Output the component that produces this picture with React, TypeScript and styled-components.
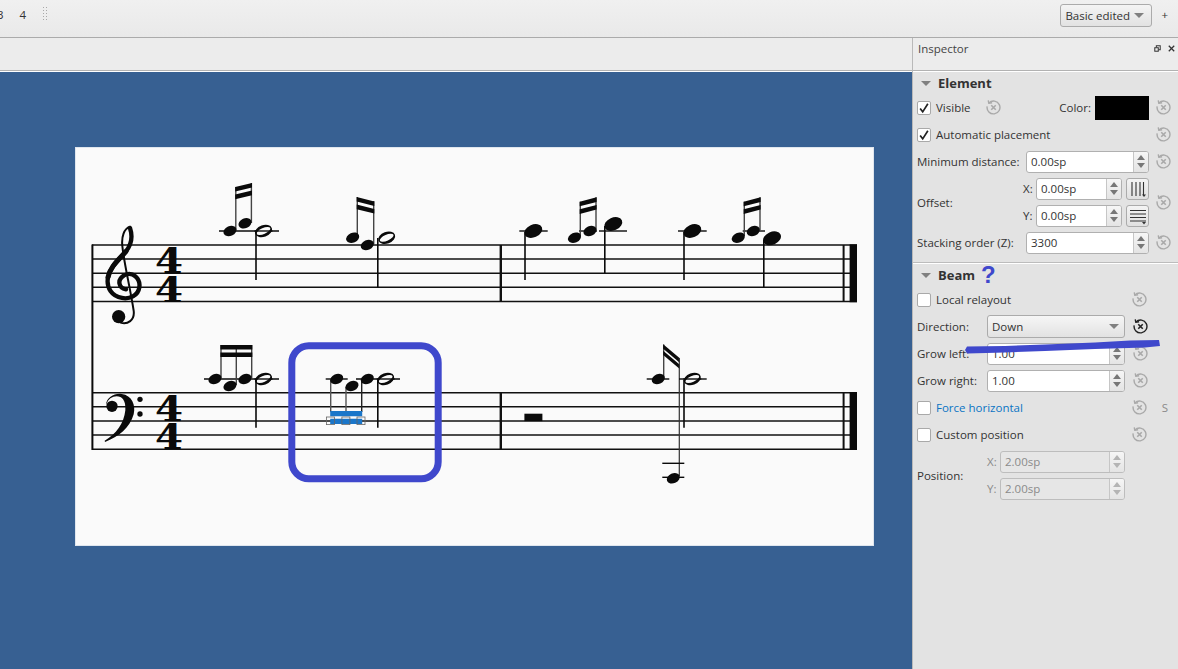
import React from "react";
import styled, { createGlobalStyle } from "styled-components";

const GlobalStyle = createGlobalStyle`
  html, body, #root {
    margin: 0;
    height: 100%;
  }
  body {
    font-family: "Open Sans", "Noto Sans", sans-serif;
    font-size: 11.5px;
    color: #333;
    overflow: hidden;
  }
`;

const INK = "#0a0a0a";
const MARKER = "#3f48cc";
const SELECTED = "#1a76c9";

/* ---------- score drawing ---------- */

const Head = ({ x, y, big, open, struck }: { x: number; y: number; big?: boolean; open?: boolean; struck?: boolean }) => {
  if (open) {
    return (
      <g>
        <ellipse cx={x} cy={y} rx={8.8} ry={5.8} fill={INK} transform={`rotate(-20 ${x} ${y})`} />
        <ellipse cx={x} cy={y} rx={7.4} ry={3} fill="#fafafa" transform={`rotate(-24 ${x} ${y})`} />
        {struck && <line x1={x - 9} x2={x + 9} y1={y} y2={y} stroke={INK} strokeWidth={1.4} />}
      </g>
    );
  }
  return (
    <ellipse
      cx={x}
      cy={y}
      rx={big ? 9.4 : 6.8}
      ry={big ? 6.4 : 4.9}
      fill={INK}
      transform={`rotate(-24 ${x} ${y})`}
    />
  );
};

const Line = ({ x1, y1, x2, y2, w = 1.4, c = INK }: { x1: number; y1: number; x2: number; y2: number; w?: number; c?: string }) => (
  <line x1={x1} y1={y1} x2={x2} y2={y2} stroke={c} strokeWidth={w} />
);

// two stacked beams between two stems
const Beams = ({ x1, y1, x2, y2, c = INK, t = 4.6, gap = 7.6 }: { x1: number; y1: number; x2: number; y2: number; c?: string; t?: number; gap?: number }) => (
  <g fill={c}>
    <polygon points={`${x1},${y1} ${x2},${y2} ${x2},${y2 + t} ${x1},${y1 + t}`} />
    <polygon points={`${x1},${y1 + gap} ${x2},${y2 + gap} ${x2},${y2 + gap + t} ${x1},${y1 + gap + t}`} />
  </g>
);

const Staff = ({ top }: { top: number }) => (
  <g>
    {[0, 14.1, 28.2, 42.3, 56.5].map((d) => (
      <Line key={d} x1={92} x2={857} y1={top + d} y2={top + d} w={1.5} c="#111" />
    ))}
    <Line x1={500.8} x2={500.8} y1={top} y2={top + 56.5} w={2.4} c="#111" />
    <Line x1={843.6} x2={843.6} y1={top} y2={top + 56.5} w={2} c="#111" />
    <rect x={849.6} y={top - 0.6} width={7.4} height={57.8} fill={INK} />
  </g>
);

const TimeDigit = styled.text`
  font-family: "DejaVu Serif", serif;
  font-weight: 700;
  font-size: 36px;
  fill: ${INK};
  text-anchor: middle;
`;

const TimeSig = ({ top }: { top: number }) => (
  <g>
    <g transform={`translate(169 ${top + 28}) scale(1.12 1)`}>
      <TimeDigit>4</TimeDigit>
    </g>
    <g transform={`translate(169 ${top + 56.5}) scale(1.12 1)`}>
      <TimeDigit>4</TimeDigit>
    </g>
  </g>
);

const TrebleClef = () => (
  <g transform="translate(90 220) scale(.3333)" fill="none" stroke={INK} strokeLinecap="round">
    <path d="M108 208 C86 204 80 180 102 166 C128 152 152 176 148 202 C144 228 118 238 96 234 C66 228 48 204 54 172 C60 140 88 118 108 94 C124 74 128 48 120 24" strokeWidth={13} />
    <path d="M120 20 C102 26 94 50 97 78 C102 130 120 200 131 272 C135 302 112 314 92 308" strokeWidth={6} />
    <path d="M54 172 C60 140 88 118 108 94" strokeWidth={15} />
    <circle cx={86} cy={290} r={20} fill={INK} stroke="none" />
  </g>
);

const BassClef = () => (
  <g transform="translate(90 385) scale(.3333)" fill={INK}>
    <path d="M48 60 C50 36 74 24 95 27 C126 31 138 60 131 88 C120 128 86 156 45 171 L44 167 C78 148 102 116 106 76 C108 46 96 34 80 34 C66 35 56 42 52 52 Z" />
    <circle cx={66} cy={64} r={17} />
    <circle cx={150} cy={43} r={8} />
    <circle cx={150} cy={87} r={8} />
  </g>
);

const Score = styled.svg`
  display: block;
  width: 100%;
  height: 100%;
`;

const ScoreDrawing = () => (
  <Score viewBox="75 147 799 399">
    <Staff top={245} />
    <Staff top={392.7} />
    <Line x1={92.4} x2={92.4} y1={244.5} y2={450} w={2} />
    <TrebleClef />
    <BassClef />
    <TimeSig top={245} />
    <TimeSig top={392.7} />

    {/* top staff, first bar */}
    <Line x1={219} x2={279} y1={231} y2={231} />
    <Line x1={235.8} x2={235.8} y1={231} y2={187} c="#444" />
    <Line x1={251.4} x2={251.4} y1={223} y2={183} c="#444" />
    <Beams x1={235.2} y1={187} x2={252} y2={183} />
    <Head x={230} y={231} />
    <Head x={245} y={223.3} />
    <Head x={263.5} y={231} open struck />
    <Line x1={256} x2={256} y1={231} y2={280} w={1.6} />

    <Line x1={357.3} x2={357.3} y1={236} y2={197} c="#444" />
    <Line x1={373.7} x2={373.7} y1={244} y2={201} c="#444" />
    <Beams x1={356.7} y1={197} x2={374.3} y2={201.4} />
    <Head x={352.7} y={237.7} />
    <Head x={367.3} y={245} />
    <Head x={386.7} y={237.7} open />
    <Line x1={377.8} x2={377.8} y1={238} y2={287.3} w={1.6} />

    {/* top staff, second bar */}
    <Line x1={519.3} x2={547.7} y1={231} y2={231} />
    <Head x={533.3} y={231} big />
    <Line x1={525} x2={525} y1={232} y2={280} w={1.6} />

    <Line x1={579} x2={597} y1={231} y2={231} />
    <Line x1={580.3} x2={580.3} y1={236} y2={201.7} c="#444" />
    <Line x1={596} x2={596} y1={230} y2={197.3} c="#444" />
    <Beams x1={579.7} y1={201.7} x2={596.6} y2={197.3} />
    <Head x={574.5} y={237.7} />
    <Head x={590} y={231} />
    <Line x1={599} x2={627} y1={231} y2={231} />
    <Head x={613.3} y={224} big />
    <Line x1={604.8} x2={604.8} y1={226} y2={273} w={1.6} />

    <Line x1={678} x2={706.7} y1={231} y2={231} />
    <Head x={692.3} y={231} big />
    <Line x1={684} x2={684} y1={232} y2={280} w={1.6} />

    <Line x1={742.7} x2={765} y1={231} y2={231} />
    <Line x1={744.3} x2={744.3} y1={236} y2={201.7} c="#444" />
    <Line x1={760} x2={760} y1={230} y2={197.3} c="#444" />
    <Beams x1={743.7} y1={201.7} x2={760.6} y2={197.3} />
    <Head x={738.3} y={237.7} />
    <Head x={753.3} y={231} />
    <Head x={772} y={238.3} big />
    <Line x1={763.8} x2={763.8} y1={240} y2={287.3} w={1.6} />

    {/* bottom staff, first bar */}
    <Line x1={204} x2={279} y1={379} y2={379} />
    <Line x1={221} x2={221} y1={345} y2={378} c="#444" />
    <Line x1={236.3} x2={236.3} y1={345} y2={385} c="#444" />
    <Line x1={251.7} x2={251.7} y1={345} y2={378} c="#444" />
    <Beams x1={220.4} y1={345} x2={252.3} y2={345} gap={7.4} />
    <Head x={215} y={379} />
    <Head x={230} y={386} />
    <Head x={245} y={379} />
    <Head x={263.5} y={379} open struck />
    <Line x1={256} x2={256} y1={379} y2={427.7} w={1.6} />

    {/* the selected beam */}
    <Line x1={325.7} x2={347.7} y1={379} y2={379} />
    <Line x1={356} x2={400} y1={379} y2={379} />
    <Line x1={330.7} x2={330.7} y1={380} y2={412} c="#555" />
    <Line x1={346} x2={346} y1={387} y2={412} c="#555" />
    <Line x1={361.7} x2={361.7} y1={380} y2={412} c="#222" />
    <Beams x1={330.2} y1={411} x2={362.2} y2={411} c={SELECTED} t={5.2} gap={7.8} />
    <g fill="none" stroke="#666" strokeWidth={0.8}>
      <rect x={326.4} y={417} width={8} height={7.6} />
      <rect x={341.9} y={417} width={8} height={7.6} />
      <rect x={357} y={417} width={8} height={7.6} />
    </g>
    <Head x={336.7} y={379} />
    <Head x={352} y={386} />
    <Head x={367.3} y={379} />
    <Head x={385.7} y={379} open struck />
    <Line x1={377.8} x2={377.8} y1={379} y2={427.7} w={1.6} />

    {/* bottom staff, second bar */}
    <rect x={524.4} y={413.7} width={18} height={7.4} fill={INK} />
    <Line x1={646.7} x2={669.3} y1={379} y2={379} />
    <Line x1={663.7} x2={663.7} y1={378} y2={344.5} c="#444" />
    <Beams x1={663.2} y1={344.3} x2={679.8} y2={358.3} gap={6.4} t={4.4} />
    <Head x={658.3} y={379} />
    <Line x1={679.3} x2={679.3} y1={358} y2={476} w={1.2} c="#333" />
    <Line x1={662.3} x2={684.3} y1={463.3} y2={463.3} />
    <Line x1={662.3} x2={684.3} y1={477.3} y2={477.3} />
    <Head x={673.3} y={478.3} />
    <Line x1={679} x2={706.7} y1={379} y2={379} />
    <Head x={692.3} y={379} open struck />
    <Line x1={684} x2={684} y1={380} y2={427.7} w={1.6} />

    {/* hand-drawn marker around the beam */}
    <rect x={291.8} y={345.8} width={146.4} height={133} rx={17} fill="none" stroke={MARKER} strokeWidth={7} />
  </Score>
);

/* ---------- small icons ---------- */

const ResetSvg = styled.svg<{ $active?: boolean }>`
  display: block;
  flex: none;
  width: 15px;
  height: 15px;
  color: ${(p) => (p.$active ? "#222" : "#a9a9a9")};
`;

const ResetIcon = ({ active, className }: { active?: boolean; className?: string }) => (
  <ResetSvg viewBox="1.5 1.5 14 14" fill="none" stroke="currentColor" strokeWidth={1.3} $active={active} className={className}>
    <path d="M4.3 4.2 A6 6 0 1 1 2.6 7.4" />
    <path d="M3.6 1.8 L4.1 4.6 L7.2 4.1" />
    <path d="M6.4 6.4 L10.6 10.6 M10.6 6.4 L6.4 10.6" strokeWidth={1.5} />
  </ResetSvg>
);

const CheckMark = () => (
  <svg viewBox="0 0 14 14" width={12} height={12} fill="none" stroke="#222" strokeWidth={2}>
    <path d="M2.5 7.5 L5.5 11.5 L11.5 2" />
  </svg>
);

const VoiceIcon = () => (
  <svg viewBox="0 0 18 18" width={18} height={18} fill="none" stroke="#333" strokeWidth={1.1}>
    <path d="M3 2 V16 M7 2 V16 M11 2 V16 M14.5 2 V15" />
    <path d="M13 14.5 H17 L15 17 Z" fill="#333" stroke="none" />
  </svg>
);

const HLinesIcon = () => (
  <svg viewBox="0 0 18 18" width={18} height={18} fill="none" stroke="#333" strokeWidth={1.1}>
    <path d="M1 3.5 H17 M1 7 H17 M1 10.5 H17 M1 14 H17" />
    <path d="M13 15 H17 L15 17.4 Z" fill="#333" stroke="none" />
  </svg>
);

const FloatIcon = () => (
  <svg viewBox="0 0 9 9" width={7} height={7} fill="none" stroke="#333" strokeWidth={1.3}>
    <path d="M3 3 V1 H8 V6 H6" />
    <rect x={1} y={3.5} width={4.5} height={4.5} />
  </svg>
);

const CloseIcon = () => (
  <svg viewBox="0 0 9 9" width={7} height={7} fill="none" stroke="#333" strokeWidth={1.6}>
    <path d="M1 1 L8 8 M8 1 L1 8" />
  </svg>
);

/* ---------- page frame ---------- */

const Frame = styled.div`
  display: flex;
  flex-direction: column;
  height: 100%;
`;

const Toolbar = styled.div`
  flex: none;
  height: 37px;
  box-sizing: content-box;
  display: flex;
  align-items: flex-start;
  padding-right: 10px;
  background: linear-gradient(#f0f0f0, #e9e9e9);
  border-bottom: 1px solid #ababab;
`;

const PageNumber = styled.span<{ $offset: number }>`
  margin: 7px 0 0 ${(p) => p.$offset}px;
  color: #333;
`;

const Grip = styled.span`
  width: 5px;
  height: 16px;
  margin: 6px 0 0 16px;
  background-image: radial-gradient(circle, #a8a8a8 0.9px, transparent 1px);
  background-size: 3px 3px;
`;

const Workspace = styled.div`
  flex: none;
  margin: 4px 0 0 auto;
  width: 92px;
  height: 23px;
  box-sizing: border-box;
  display: flex;
  align-items: center;
  justify-content: space-between;
  padding: 0 7px 0 4px;
  background: linear-gradient(#f4f4f4, #e2e2e2);
  border: 1px solid #ababab;
  border-radius: 3px;
`;

const Plus = styled.span`
  margin: 7px 0 0 9px;
  color: #333;
`;

const Caret = styled.i`
  flex: none;
  width: 0;
  height: 0;
  border-left: 5px solid transparent;
  border-right: 5px solid transparent;
  border-top: 5px solid #808080;
`;

const Body = styled.div`
  flex: 1;
  min-height: 0;
  display: flex;
`;

const Main = styled.div`
  flex: 1;
  min-width: 0;
  display: flex;
  flex-direction: column;
`;

const TabBar = styled.div`
  flex: none;
  height: 32px;
  background: #ececec;
  border-bottom: 1px solid #b2b2b2;
`;

const Canvas = styled.div`
  flex: 1;
  box-sizing: border-box;
  padding: 75px 0 0 75px;
  background: #376092;
  border-top: 1px solid #fff;
`;

const Sheet = styled.div`
  width: 799px;
  height: 399px;
  background: #fafafa;
  outline: 1px solid #dfe6ee;
  outline-offset: -1px;
`;

/* ---------- inspector ---------- */

const Inspector = styled.aside`
  position: relative;
  flex: none;
  width: 266px;
  box-sizing: border-box;
  background: #e3e3e3;
  border-left: 1px solid #b9b9b9;
`;

const DockTitle = styled.div`
  height: 32px;
  box-sizing: border-box;
  display: flex;
  align-items: flex-start;
  gap: 7px;
  padding: 3px 3px 0 5px;
  background: #ececec;
  color: #444;
  span {
    margin-right: auto;
  }
  svg {
    margin-top: 4px;
  }
`;

const Section = styled.section<{ $divided?: boolean }>`
  padding-bottom: ${(p) => (p.$divided ? 0 : 6)}px;
  border-top: 1px solid ${(p) => (p.$divided ? "#bcbcbc" : "#b2b2b2")};
  box-shadow: inset 0 1px 0 #fff;
`;

const SectionHead = styled.h3`
  margin: 0;
  height: 23px;
  padding: 1px 0 0 8px;
  box-sizing: border-box;
  display: flex;
  align-items: center;
  gap: 7px;
  font-size: 13px;
  font-weight: 700;
  color: #333;
`;

const Help = styled.span`
  margin-left: -1px;
  font-family: "Liberation Sans", sans-serif;
  font-size: 24px;
  line-height: 22px;
  font-weight: 700;
  color: ${MARKER};
`;

const Row = styled.div<{ $tall?: boolean }>`
  height: ${(p) => (p.$tall ? 54 : 27)}px;
  display: flex;
  align-items: center;
  padding: 0 7px 0 4px;
`;

const Label = styled.span<{ $width: number }>`
  flex: none;
  width: ${(p) => p.$width}px;
  white-space: nowrap;
`;

const CheckBox = styled.span`
  flex: none;
  width: 14px;
  height: 14px;
  box-sizing: border-box;
  display: flex;
  align-items: center;
  justify-content: center;
  margin-right: 5px;
  background: #fff;
  border: 1px solid #a9a9a9;
  border-radius: 2px;
`;

const CheckText = styled.span<{ $link?: boolean }>`
  color: ${(p) => (p.$link ? "#0a74c4" : "#333")};
`;

const Push = styled.span`
  margin-left: auto;
`;

const ColorLabel = styled.span`
  margin-left: auto;
`;

const ColorSwatch = styled.span`
  flex: none;
  width: 54px;
  height: 24px;
  margin: 0 7px 0 4px;
  background: #000;
`;

const SpinBox = styled.div<{ $width: number; $disabled?: boolean }>`
  flex: none;
  width: ${(p) => p.$width}px;
  height: 22px;
  box-sizing: border-box;
  display: flex;
  align-items: stretch;
  background: ${(p) => (p.$disabled ? "#e6e6e6" : "#fff")};
  border: 1px solid ${(p) => (p.$disabled ? "#bdbdbd" : "#b0b0b0")};
  border-radius: 3px;
  color: ${(p) => (p.$disabled ? "#8a8a8a" : "#333")};
`;

const SpinValue = styled.span`
  flex: 1;
  padding-left: 4px;
  line-height: 20px;
`;

const SpinArrows = styled.span`
  flex: none;
  width: 14px;
  display: flex;
  flex-direction: column;
  align-items: center;
  justify-content: center;
  gap: 3px;
  border-left: 1px solid #c6c6c6;
  background: linear-gradient(#f6f6f6, #e4e4e4);
  border-radius: 0 2px 2px 0;
`;

const Arrow = styled.i<{ $down?: boolean; $disabled?: boolean }>`
  width: 0;
  height: 0;
  border-left: 4.5px solid transparent;
  border-right: 4.5px solid transparent;
  ${(p) => (p.$down ? "border-top" : "border-bottom")}: 5px solid ${(p) => (p.$disabled ? "#b4b4b4" : "#777")};
`;

const Spin = ({ value, width, disabled }: { value: string; width: number; disabled?: boolean }) => (
  <SpinBox $width={width} $disabled={disabled}>
    <SpinValue>{value}</SpinValue>
    <SpinArrows>
      <Arrow $disabled={disabled} />
      <Arrow $down $disabled={disabled} />
    </SpinArrows>
  </SpinBox>
);

const Combo = styled.div`
  flex: none;
  width: 138px;
  height: 23px;
  box-sizing: border-box;
  display: flex;
  align-items: center;
  justify-content: space-between;
  padding: 0 5px 0 4px;
  background: linear-gradient(#f6f6f6, #e2e2e2);
  border: 1px solid #ababab;
  border-radius: 3px;
`;

const AxisStack = styled.div`
  display: flex;
  flex-direction: column;
`;

const AxisRow = styled.div`
  height: 27px;
  display: flex;
  align-items: center;
`;

const AxisLabel = styled.span<{ $disabled?: boolean }>`
  flex: none;
  width: 13px;
  color: ${(p) => (p.$disabled ? "#8a8a8a" : "#333")};
`;

const ToolButton = styled.div`
  flex: none;
  width: 23px;
  height: 22px;
  box-sizing: border-box;
  margin-left: 4px;
  display: flex;
  align-items: center;
  justify-content: center;
  background: linear-gradient(#f4f4f4, #e0e0e0);
  border: 1px solid #ababab;
  border-radius: 3px;
`;

const SideSlot = styled.span`
  flex: none;
  width: 24px;
  padding-right: 3px;
  box-sizing: border-box;
  text-align: right;
  color: #8a8a8a;
`;

const BeamReset = styled(ResetIcon)`
  margin-left: 8px;
`;

const VisibleReset = styled(ResetIcon)`
  margin-left: 15px;
`;

const Strike = styled.svg`
  position: absolute;
  left: 52px;
  top: 302px;
  width: 196px;
  height: 14px;
  overflow: visible;
`;

const resetAt = <Push><ResetIcon /></Push>;

const App = () => (
  <>
    <GlobalStyle />
    <Frame>
      <Toolbar>
        <PageNumber $offset={-3}>3</PageNumber>
        <PageNumber $offset={16}>4</PageNumber>
        <Grip />
        <Workspace>
          Basic edited
          <Caret />
        </Workspace>
        <Plus>+</Plus>
      </Toolbar>
      <Body>
        <Main>
          <TabBar />
          <Canvas>
            <Sheet>
              <ScoreDrawing />
            </Sheet>
          </Canvas>
        </Main>
        <Inspector>
          <DockTitle>
            <span>Inspector</span>
            <FloatIcon />
            <CloseIcon />
          </DockTitle>

          <Section>
            <SectionHead>
              <Caret />
              Element
            </SectionHead>
            <Row>
              <CheckBox><CheckMark /></CheckBox>
              <CheckText>Visible</CheckText>
              <VisibleReset />
              <ColorLabel>Color:</ColorLabel>
              <ColorSwatch />
              <ResetIcon />
            </Row>
            <Row>
              <CheckBox><CheckMark /></CheckBox>
              <CheckText>Automatic placement</CheckText>
              {resetAt}
            </Row>
            <Row>
              <Label $width={109}>Minimum distance:</Label>
              <Spin value="0.00sp" width={123} />
              {resetAt}
            </Row>
            <Row $tall>
              <Label $width={106}>Offset:</Label>
              <AxisStack>
                <AxisRow>
                  <AxisLabel>X:</AxisLabel>
                  <Spin value="0.00sp" width={86} />
                  <ToolButton><VoiceIcon /></ToolButton>
                </AxisRow>
                <AxisRow>
                  <AxisLabel>Y:</AxisLabel>
                  <Spin value="0.00sp" width={86} />
                  <ToolButton><HLinesIcon /></ToolButton>
                </AxisRow>
              </AxisStack>
              {resetAt}
            </Row>
            <Row>
              <Label $width={109}>Stacking order (Z):</Label>
              <Spin value="3300" width={123} />
              {resetAt}
            </Row>
          </Section>

          <Section $divided>
            <SectionHead>
              <Caret />
              Beam
              <Help>?</Help>
            </SectionHead>
            <Row>
              <CheckBox />
              <CheckText>Local relayout</CheckText>
              <Push />
              <BeamReset />
              <SideSlot />
            </Row>
            <Row>
              <Label $width={70}>Direction:</Label>
              <Combo>
                Down
                <Caret />
              </Combo>
              <BeamReset active />
              <SideSlot />
            </Row>
            <Row>
              <Label $width={70}>Grow left:</Label>
              <Spin value="1.00" width={138} />
              <BeamReset />
              <SideSlot />
            </Row>
            <Row>
              <Label $width={70}>Grow right:</Label>
              <Spin value="1.00" width={138} />
              <BeamReset />
              <SideSlot />
            </Row>
            <Row>
              <CheckBox />
              <CheckText $link>Force horizontal</CheckText>
              <Push />
              <BeamReset />
              <SideSlot>S</SideSlot>
            </Row>
            <Row>
              <CheckBox />
              <CheckText>Custom position</CheckText>
              <Push />
              <BeamReset />
              <SideSlot />
            </Row>
            <Row $tall>
              <Label $width={70}>Position:</Label>
              <AxisStack>
                <AxisRow>
                  <AxisLabel $disabled>X:</AxisLabel>
                  <Spin value="2.00sp" width={125} disabled />
                </AxisRow>
                <AxisRow>
                  <AxisLabel $disabled>Y:</AxisLabel>
                  <Spin value="2.00sp" width={125} disabled />
                </AxisRow>
              </AxisStack>
            </Row>
          </Section>

          {/* marker stroke scribbled over the panel */}
          <Strike viewBox="0 0 196 14">
            <path
              d="M0 10 L2 6.5 L40 6 L80 4.5 L130 2.5 L165 0.5 L194 0 L195 6 L180 7.5 L130 9 L80 11 L40 12.5 L2 13.5 Z"
              fill={MARKER}
            />
          </Strike>
        </Inspector>
      </Body>
    </Frame>
  </>
);

export default App;
